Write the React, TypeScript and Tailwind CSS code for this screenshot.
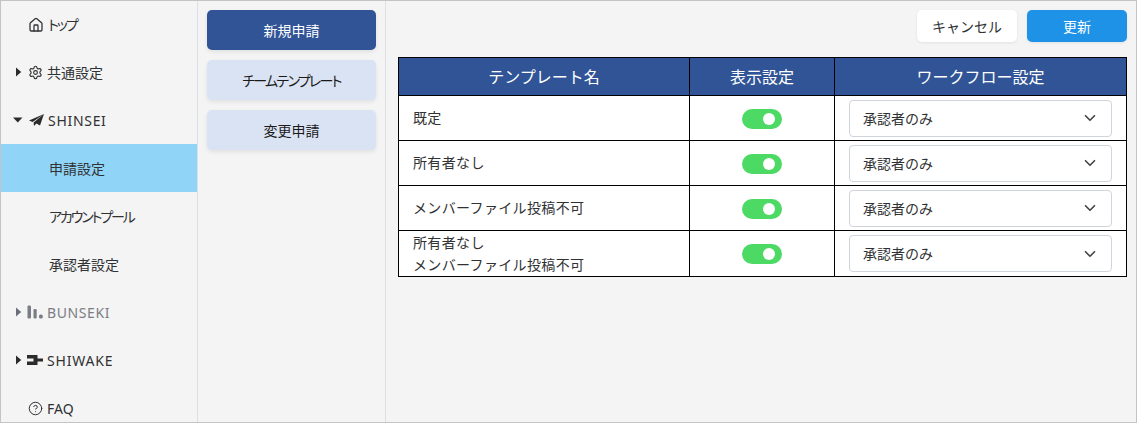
import { ChevronDown, CircleHelp, House, Settings } from "lucide-react";
import type { ReactNode } from "react";

const font = "font-['Noto_Sans','Noto_Sans_CJK_JP',sans-serif]";

function Caret({ open, muted }: { open?: boolean; muted?: boolean }) {
  return (
    <svg viewBox="0 0 10 10" className={`w-[10px] h-[10px] shrink-0 ${muted ? "text-[#6b6f78]" : "text-[#2b2b2b]"}`}>
      <path d={open ? "M0 2.5h9.5L4.8 7.5z" : "M3 0.5l5.2 4.5L3 9.5z"} fill="currentColor" />
    </svg>
  );
}

function SendIcon() {
  return (
    <svg viewBox="0 0 15 12" className="w-[15px] h-[12px] shrink-0 ml-[2px] text-[#2b2b2b]">
      <path d="M15 0L0 6.5l3.6 1.6z M15 0L4.6 8.4 5 12l2.4-2.4 3.6 1.8z" fill="currentColor" />
    </svg>
  );
}

function BarsIcon() {
  return (
    <svg viewBox="0 0 16 14" className="w-[16px] h-[14px] shrink-0 text-[#7a7d84]">
      <rect x="0.5" y="0.5" width="3.5" height="13" rx="1.2" fill="currentColor" />
      <rect x="6.5" y="4" width="3.2" height="9.5" rx="1.2" fill="currentColor" />
      <rect x="12" y="9.5" width="3.8" height="4" rx="1.6" fill="currentColor" />
    </svg>
  );
}

function PlugIcon() {
  return (
    <svg viewBox="0 0 16 10" className="w-[16px] h-[10px] shrink-0 text-[#2b2b2b]">
      <path d="M0 0h10.5v10H0V6.5h6.5v-3H0z M10.5 3.5H16v3h-5.5z" fill="currentColor" />
    </svg>
  );
}

function NavRow({
  caret,
  icon,
  label,
  textClass = "ml-[2px]",
  rowClass = "h-[48px]",
  muted,
}: {
  caret?: ReactNode;
  icon: ReactNode;
  label: string;
  textClass?: string;
  rowClass?: string;
  muted?: boolean;
}) {
  return (
    <div className={`${rowClass} flex items-center text-[14px] ${muted ? "text-[#7a7d84]" : ""}`}>
      <span className="w-[22px] mr-[1px] flex justify-end shrink-0">{caret}</span>
      <span className="w-[22px] flex justify-center shrink-0">{icon}</span>
      <span className={textClass}>{label}</span>
    </div>
  );
}

function SubRow({ label, active, textClass = "" }: { label: string; active?: boolean; textClass?: string }) {
  return (
    <div className={`h-[48px] flex items-center pl-[48px] text-[14px] ${active ? "bg-[#90d4f7]" : ""} ${textClass}`}>
      {label}
    </div>
  );
}

function Sidebar() {
  return (
    <aside className="w-[197px] shrink-0 border-r border-[#dcdfe6] text-[#303133] overflow-hidden">
      <NavRow
        rowClass="h-[47px]"
        textClass="ml-[2px] tracking-[-2px] [font-feature-settings:'palt']"
        icon={<House className="w-[16px] h-[16px] ml-[2px]" strokeWidth={1.9} />}
        label="トップ"
      />
      <NavRow
        caret={<Caret />}
        icon={<Settings className="w-[15px] h-[15px]" strokeWidth={1.8} />}
        label="共通設定"
        textClass="ml-[1px]"
      />
      <NavRow caret={<Caret open />} icon={<SendIcon />} label="SHINSEI" textClass="ml-[2px] tracking-[0.7px]" />
      <SubRow label="申請設定" active />
      <SubRow label="アカウントプール" textClass="tracking-[-2.1px] [font-feature-settings:'palt']" />
      <SubRow label="承認者設定" />
      <NavRow caret={<Caret muted />} icon={<BarsIcon />} label="BUNSEKI" textClass="ml-[1px] tracking-[0.6px]" muted />
      <NavRow caret={<Caret />} icon={<PlugIcon />} label="SHIWAKE" textClass="ml-[1px] tracking-[0.8px]" />
      <NavRow icon={<CircleHelp className="w-[15px] h-[15px]" strokeWidth={1.6} />} label="FAQ" textClass="ml-[1px]" />
    </aside>
  );
}

function SideButton({ label, primary, textClass = "" }: { label: string; primary?: boolean; textClass?: string }) {
  return (
    <button
      className={`h-[40px] w-full rounded-[5px] text-[14px] shadow-[0_2px_4px_rgba(0,0,0,0.08)] ${
        primary ? "bg-[#305495] text-white" : "bg-[#dae3f3] text-[#1a1a1a]"
      } ${textClass}`}
    >
      {label}
    </button>
  );
}

function Toggle() {
  return (
    <div className="w-[40px] h-[20px] mt-[1px] rounded-full bg-[#4cd964] mx-auto flex items-center justify-end pr-[7px]">
      <span className="w-[12px] h-[12px] rounded-full bg-white" />
    </div>
  );
}

function Select() {
  return (
    <div className="h-[37px] mx-[14px] rounded-[4px] border border-[#d0d4dd] bg-white flex items-center justify-between pl-[13px] pr-[12px] text-[14px] text-[#303133]">
      承認者のみ
      <ChevronDown className="w-[18px] h-[18px] text-[#444]" strokeWidth={2.2} />
    </div>
  );
}

const rows: { key: string; lines: string[]; h: string }[] = [
  { key: "default", lines: ["既定"], h: "h-[45px]" },
  { key: "noowner", lines: ["所有者なし"], h: "h-[45px]" },
  { key: "nopost", lines: ["メンバーファイル投稿不可"], h: "h-[45px]" },
  { key: "both", lines: ["所有者なし", "メンバーファイル投稿不可"], h: "h-[46px]" },
];

export default function App() {
  return (
    <div className={`w-[1137px] h-[423px] overflow-hidden bg-[#f4f4f4] border border-[#c4c4c4] flex ${font}`}>
      <Sidebar />
      <div className="w-[188px] shrink-0 border-r border-[#dcdfe6] pt-[9px] px-[9px] flex flex-col gap-[10px]">
        <SideButton label="新規申請" primary />
        <SideButton label="チームテンプレート" textClass="tracking-[-1.7px] [font-feature-settings:'palt']" />
        <SideButton label="変更申請" />
      </div>
      <main className="flex-1 pl-[12px] pr-[9px] pt-[9px]">
        <div className="flex justify-end gap-[10px]">
          <button className="w-[100px] h-[32px] rounded-[5px] bg-white text-[14px] text-[#303133] shadow-[0_1px_3px_rgba(0,0,0,0.08)]">
            キャンセル
          </button>
          <button className="w-[100px] h-[32px] rounded-[5px] bg-[#1e92e6] text-[14px] text-white shadow-[0_1px_3px_rgba(0,0,0,0.08)]">
            更新
          </button>
        </div>
        <table className="mt-[15px] w-[729px] table-fixed border-collapse border border-black">
          <thead>
            <tr className="h-[38px] bg-[#305495] text-white text-[16px]">
              <th className="w-[291px] border border-black font-normal">テンプレート名</th>
              <th className="w-[145px] border border-black font-normal">表示設定</th>
              <th className="border border-black font-normal">ワークフロー設定</th>
            </tr>
          </thead>
          <tbody className="bg-white text-[14px] text-[#303133]">
            {rows.map((r) => (
              <tr key={r.key} className={r.h}>
                <td className="border border-black pl-[14px] leading-[22px] tracking-[0.35px]">
                  {r.lines.map((l) => (
                    <div key={l}>{l}</div>
                  ))}
                </td>
                <td className="border border-black">
                  <Toggle />
                </td>
                <td className="border border-black">
                  <Select />
                </td>
              </tr>
            ))}
          </tbody>
        </table>
      </main>
    </div>
  );
}
